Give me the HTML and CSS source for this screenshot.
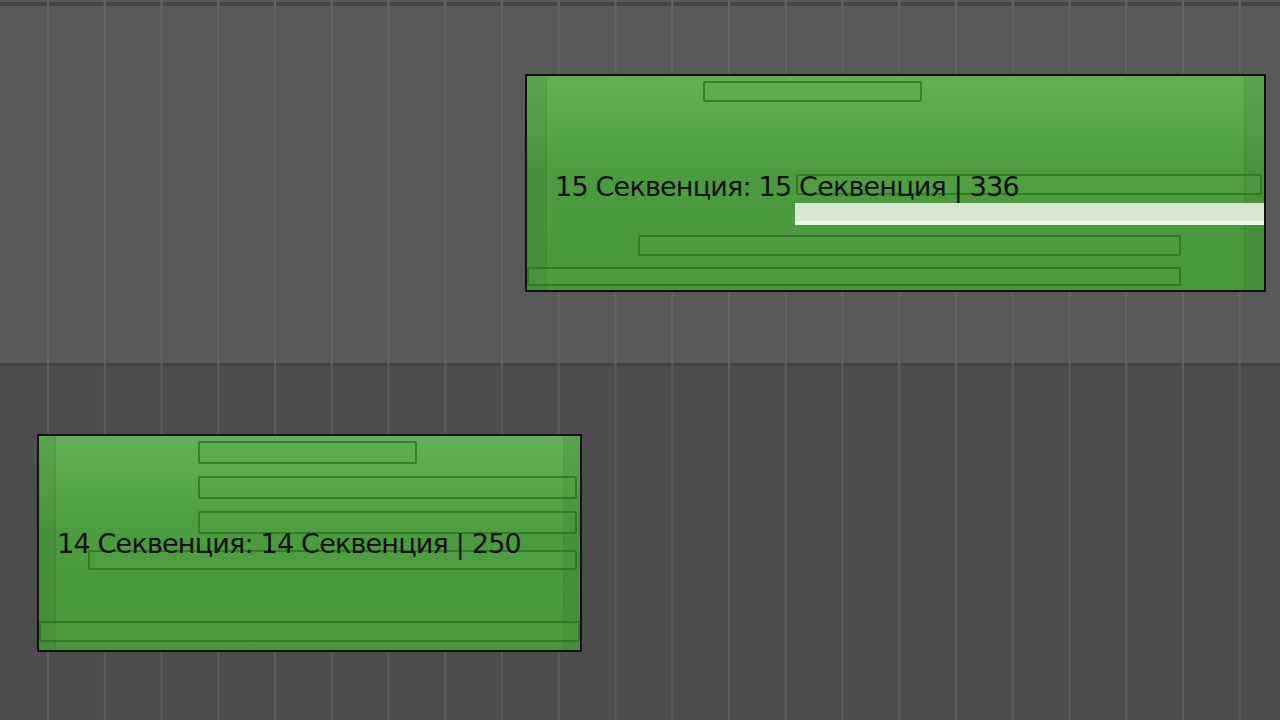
FILE: index.html
```html
<!DOCTYPE html>
<html lang="en">

<head>
    <meta charset="UTF-8">
    <meta name="viewport" content="width=device-width, initial-scale=1.0">
    <title>Sequencer</title>
    <link rel="stylesheet" href="styles.css">
</head>

<body>
    <div class="timeline">
        <div class="channel channel-upper">
            <div class="strip strip-15">
                <div class="handle handle-left"></div>
                <div class="handle handle-right"></div>
                <div class="inner" style="left: 176px; top: 5px; width: 219px; height: 21px;"></div>
                <div class="inner" style="left: 269px; top: 98px; width: 466px; height: 21px;"></div>
                <div class="inner" style="left: 111px; top: 159px; width: 543px; height: 21px;"></div>
                <div class="inner" style="left: 0; top: 191px; width: 654px; height: 19px;"></div>
                <div class="cache-bar"></div>
                <span class="label">15 Секвенция: 15 Секвенция | 336</span>
            </div>
        </div>
        <div class="channel channel-lower">
            <div class="strip strip-14">
                <div class="handle handle-left"></div>
                <div class="handle handle-right"></div>
                <div class="inner" style="left: 159px; top: 5px; width: 219px; height: 23px;"></div>
                <div class="inner" style="left: 159px; top: 40px; width: 379px; height: 23px;"></div>
                <div class="inner" style="left: 159px; top: 75px; width: 379px; height: 23px;"></div>
                <div class="inner" style="left: 49px; top: 114px; width: 489px; height: 20px;"></div>
                <div class="inner" style="left: 0; top: 185px; width: 541px; height: 21px;"></div>
                <span class="label">14 Секвенция: 14 Секвенция | 250</span>
            </div>
        </div>
    </div>
</body>

</html>
```

FILE: styles.css
```css
* {
    box-sizing: border-box;
}

body {
    margin: 0;
    background-color: #4d4d4d;
    font-family: "DejaVu Sans", sans-serif;
    overflow: hidden;
}

.timeline {
    display: flex;
    flex-direction: column;
    width: 1280px;
    height: 720px;
}

.channel {
    position: relative;
    width: 100%;
}

.channel-upper {
    height: 363px;
    background:
        linear-gradient(to right, #636363 0 2px, transparent 2px) 47px 0 / 56.76px 100% repeat-x,
        linear-gradient(#595959 0 2px, #464646 2px 6px, #595959 6px) 0 0 / 100% 100% no-repeat;
}

.channel-lower {
    height: 357px;
    background:
        linear-gradient(to right, #5c5c5c 0 2px, transparent 2px) 47px 0 / 56.76px 100% repeat-x,
        linear-gradient(#434343 0 3px, #4d4d4d 3px) 0 0 / 100% 100% no-repeat;
}

.strip {
    position: absolute;
    display: flex;
    align-items: center;
    border: 2px solid #121212;
    background: linear-gradient(#64af55 0%, #59a74b 22%, #4c9b3f 45%, #4a983c 100%);
}

.strip-15 {
    left: 525px;
    top: 74px;
    width: 741px;
    height: 218px;
    padding-left: 28px;
    padding-top: 6px;
}

.strip-14 {
    left: 37px;
    top: 71px;
    width: 545px;
    height: 218px;
    padding-left: 18px;
}

.handle {
    position: absolute;
    top: 0;
    bottom: 0;
    width: 20px;
    background-color: rgba(20, 70, 15, 0.1);
}

.handle-left {
    left: 0;
    border-right: 1px solid rgba(20, 70, 15, 0.08);
}

.handle-right {
    right: 0;
    border-left: 1px solid rgba(20, 70, 15, 0.08);
}

.strip-14 .handle {
    width: 17px;
}

.inner {
    position: absolute;
    border: 2px solid rgba(38, 110, 30, 0.7);
    border-radius: 2px;
    background-color: rgba(90, 170, 75, 0.22);
}

.cache-bar {
    position: absolute;
    left: 268px;
    right: 0;
    top: 127px;
    height: 22px;
    background: linear-gradient(#d6e4d0 0, #dbe8d6 80%, #f2f6f0 80%);
}

.label {
    position: relative;
    z-index: 2;
    font-size: 27px;
    letter-spacing: -0.8px;
    color: #111;
    white-space: nowrap;
}
```
